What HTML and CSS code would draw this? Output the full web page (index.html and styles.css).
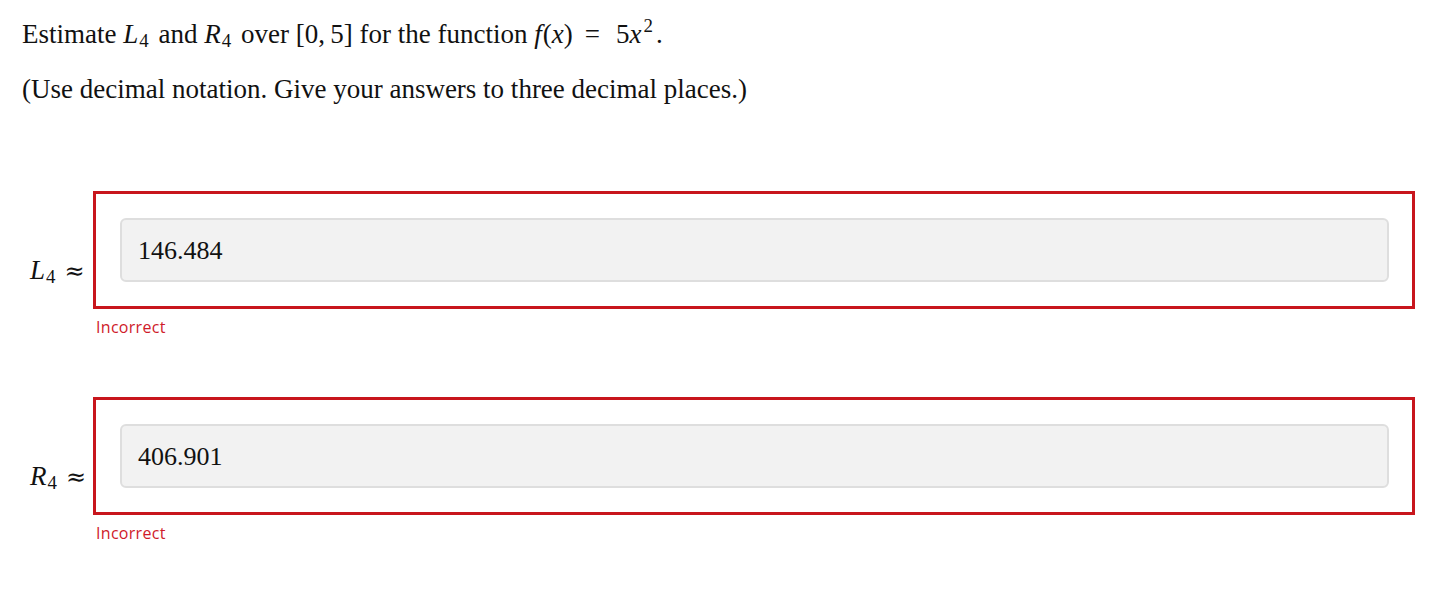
FILE: index.html
```html
<!DOCTYPE html>
<html lang="en">
<head>
<meta charset="utf-8">
<title>Riemann sums</title>
<link rel="stylesheet" href="styles.css">
</head>
<body>
<div class="page">
  <div class="question">
    <p class="line">Estimate <span class="mi">L</span><sub class="sub">4</sub> and <span class="mi">R</span><sub class="sub">4</sub> over <span class="mn">[0,&#8201;5]</span> for the function <span class="mi fn">f</span><span class="mn">(</span><span class="mi">x</span><span class="mn">)</span><span class="mo">=</span><span class="mn">5</span><span class="mi">x</span><sup class="sup">2</sup><span class="dot">.</span></p>
    <p class="line">(Use decimal notation. Give your answers to three decimal places.)</p>
  </div>

  <div class="answer">
    <div class="answer-row">
      <div class="label"><span class="mi">L</span><sub class="sub">4</sub><span class="approx">&#8776;</span></div>
      <div class="field incorrect">
        <div class="input">146.484</div>
      </div>
    </div>
    <div class="feedback">Incorrect</div>
  </div>

  <div class="answer">
    <div class="answer-row">
      <div class="label"><span class="mi">R</span><sub class="sub">4</sub><span class="approx">&#8776;</span></div>
      <div class="field incorrect">
        <div class="input">406.901</div>
      </div>
    </div>
    <div class="feedback">Incorrect</div>
  </div>
</div>
</body>
</html>
```

FILE: styles.css
```css
html, body {
  margin: 0;
  padding: 0;
  background: #ffffff;
}

.page {
  padding: 19px 23px 0 22px;
  font-family: "Liberation Serif", "Times New Roman", serif;
  color: #111111;
}

.question .line {
  margin: 0;
  font-size: 27px;
  line-height: 30px;
}

.question .line + .line {
  margin-top: 25px;
}

.mi {
  font-style: italic;
}

.fn {
  margin-left: 0;
  margin-right: 1px;
}

.sub {
  font-size: 0.7em;
  vertical-align: -0.22em;
  line-height: 0;
  margin-left: 1px;
}

.question .sub {
  margin-right: 3px;
}

.sup {
  font-size: 0.7em;
  vertical-align: 0.6em;
  line-height: 0;
  margin-left: 2px;
}

.dot {
  margin-left: 3px;
}

.mo {
  margin: 0 16px 0 12px;
}

.question + .answer {
  margin-top: 87px;
}

.answer + .answer {
  margin-top: 60px;
}

.answer-row {
  display: flex;
  align-items: stretch;
}

.label {
  width: 63px;
  padding-left: 8px;
  padding-top: 66px;
  font-size: 27px;
  line-height: 26px;
  white-space: nowrap;
}

.label .approx {
  margin-left: 9px;
  font-family: "DejaVu Serif", serif;
  font-size: 24px;
}

.field {
  flex: 1;
  padding: 24px 23px 24px 24px;
  border: 3px solid #c8161d;
}

.input {
  height: 60px;
  border: 2px solid #dedede;
  border-radius: 6px;
  background: #f2f2f2;
  padding: 0 16px;
  font-size: 26px;
  line-height: 62px;
  color: #111111;
}

.feedback {
  margin-left: 74px;
  padding-top: 8px;
  font-family: "Open Sans", "Noto Sans", sans-serif;
  font-size: 16px;
  letter-spacing: 0.3px;
  line-height: 20px;
  color: #cf1a2a;
}
```
